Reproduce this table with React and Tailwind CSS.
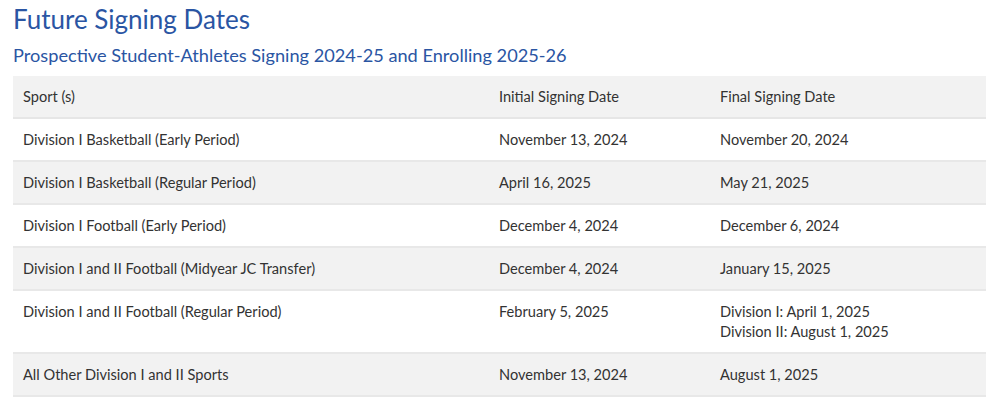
const rows = [
  { sport: 'Division I Basketball (Early Period)', initial: 'November 13, 2024', final: ['November 20, 2024'] },
  { sport: 'Division I Basketball (Regular Period)', initial: 'April 16, 2025', final: ['May 21, 2025'] },
  { sport: 'Division I Football (Early Period)', initial: 'December 4, 2024', final: ['December 6, 2024'] },
  { sport: 'Division I and II Football (Midyear JC Transfer)', initial: 'December 4, 2024', final: ['January 15, 2025'] },
  {
    sport: 'Division I and II Football (Regular Period)',
    initial: 'February 5, 2025',
    final: ['Division I: April 1, 2025', 'Division II: August 1, 2025'],
  },
  { sport: 'All Other Division I and II Sports', initial: 'November 13, 2024', final: ['August 1, 2025'] },
];

export default function App() {
  return (
    <div className="min-h-[419px] bg-white px-[13px] pt-[4px] font-['Lato','Noto_Sans',sans-serif] text-[#333]">
      <h1 className="text-[26px] leading-[30px] text-[#2a55a3]">Future Signing Dates</h1>
      <h2 className="mt-[9px] text-[18.2px] leading-[24px] text-[#2a55a3]">
        Prospective Student-Athletes Signing 2024-25 and Enrolling 2025-26
      </h2>
      <table className="mt-[9px] w-[973px] table-fixed border-collapse text-[14.6px] leading-[20px]">
        <colgroup>
          <col className="w-[476px]" />
          <col className="w-[221px]" />
          <col className="w-[276px]" />
        </colgroup>
        <thead>
          <tr className="bg-[#f2f2f2] border-b-2 border-[#e6e6e6]">
            <th className="h-[42px] px-[10px] text-left font-normal align-middle">Sport (s)</th>
            <th className="px-[10px] text-left font-normal align-middle">Initial Signing Date</th>
            <th className="px-[10px] text-left font-normal align-middle">Final Signing Date</th>
          </tr>
        </thead>
        <tbody>
          {rows.map((row, i) => (
            <tr key={row.sport} className={`border-b-2 border-[#e8e8e8] ${i % 2 === 1 ? 'bg-[#f2f2f2]' : 'bg-white'}`}>
              <td className="px-[10px] pt-[11px] pb-[10px] align-top">{row.sport}</td>
              <td className="px-[10px] pt-[11px] pb-[10px] align-top">{row.initial}</td>
              <td className="px-[10px] pt-[11px] pb-[10px] align-top">
                {row.final.map((f) => (
                  <div key={f}>{f}</div>
                ))}
              </td>
            </tr>
          ))}
        </tbody>
      </table>
    </div>
  );
}
